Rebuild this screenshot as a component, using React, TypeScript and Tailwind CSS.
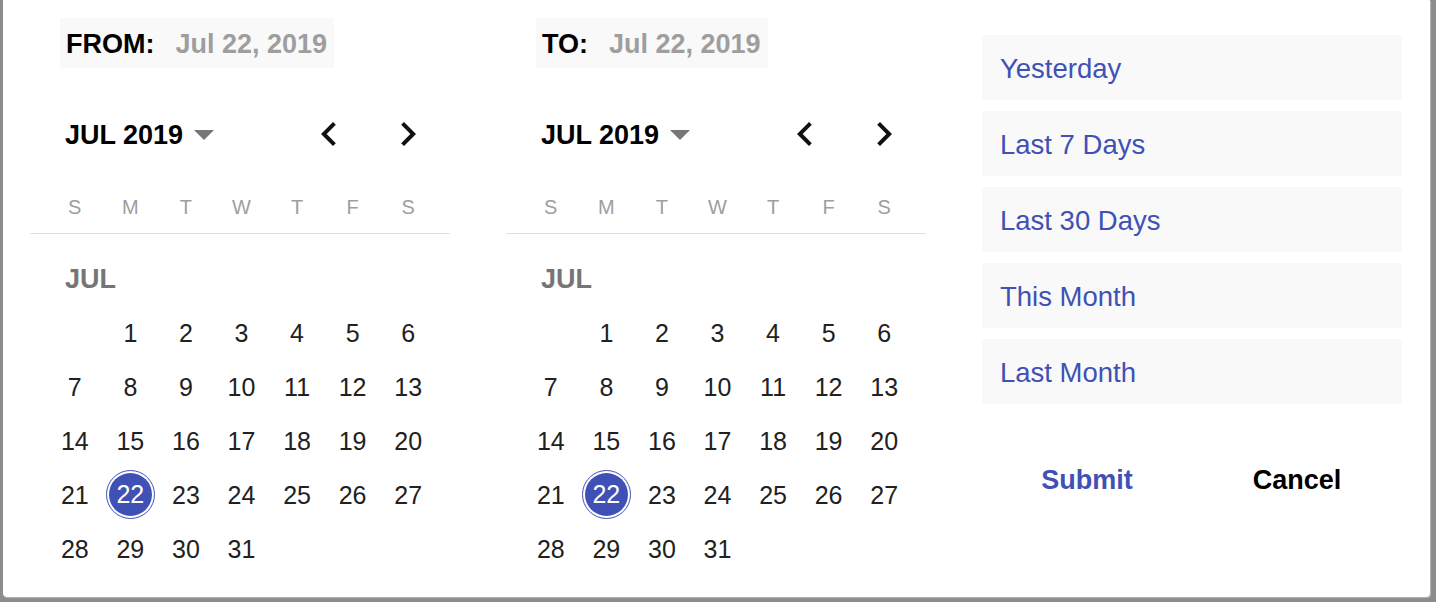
const WEEKDAYS = ['S', 'M', 'T', 'W', 'T', 'F', 'S'];
const PRESETS = ['Yesterday', 'Last 7 Days', 'Last 30 Days', 'This Month', 'Last Month'];

// July 2019 starts on a Monday
const cells: (number | null)[] = [null, ...Array.from({ length: 31 }, (_, i) => i + 1)];
while (cells.length % 7 !== 0) cells.push(null);
const weeks: (number | null)[][] = [];
for (let i = 0; i < cells.length; i += 7) weeks.push(cells.slice(i, i + 7));

const ChevronLeft = () => (
  <svg width="48" height="48" viewBox="0 0 24 24" fill="#111">
    <path d="M15.41 7.41L14 6l-6 6 6 6 1.41-1.41L10.83 12z" />
  </svg>
);

const ChevronRight = () => (
  <svg width="48" height="48" viewBox="0 0 24 24" fill="#111">
    <path d="M10 6L8.59 7.41 13.17 12l-4.58 4.59L10 18l6-6z" />
  </svg>
);

const Calendar = ({ label, selected }: { label: string; selected: number }) => (
  <div className="flex w-[420px] flex-col">
    {/* Date field */}
    <div className="ml-[30px] mt-[18px] flex h-[50px] w-fit items-center bg-[#f9f9f9] pl-[6px] pr-[7px] pt-[3px] text-[27px] font-bold">
      <span className="text-black">{label}</span>
      <span className="ml-[21px] text-[#9e9e9e]">Jul 22, 2019</span>
    </div>

    {/* Month header */}
    <div className="mt-[42px] flex h-[48px] items-center pl-[35px] pr-[18px]">
      <span className="pt-[2px] text-[27px] font-bold text-black">JUL 2019</span>
      <svg width="20" height="10" viewBox="0 0 20 10" className="ml-[11px] mt-[2px]">
        <polygon points="0,0 20,0 10,10" fill="#777" />
      </svg>
      <div className="ml-auto flex items-center gap-[31px]">
        <ChevronLeft />
        <ChevronRight />
      </div>
    </div>

    {/* Weekdays */}
    <div className="mt-[22px] grid h-[54px] grid-cols-7 items-center border-b border-[#e0e0e0] pl-[17px] pr-[14px] text-[20px] text-[#9e9e9e]">
      {WEEKDAYS.map((d, i) => (
        <span key={i} className="text-center">
          {d}
        </span>
      ))}
    </div>

    <div className="mt-[17px] flex h-[54px] items-center pl-[35px] pt-[2px] text-[27px] font-bold text-[#757575]">JUL</div>

    {weeks.map((week, wi) => (
      <div key={wi} className="grid h-[54px] grid-cols-7 pl-[17px] pr-[14px] text-[25px] text-[#212121]">
        {week.map((day, di) => (
          <div key={di} className="flex items-center justify-center">
            {day === selected ? (
              <div className="flex h-[49px] w-[49px] items-center justify-center rounded-full border-[1.5px] border-[#3f51b5] p-[2px]">
                <div className="flex h-full w-full items-center justify-center rounded-full bg-[#3f51b5] pt-[2px] text-white">
                  {day}
                </div>
              </div>
            ) : (
              <span className="pt-[4px]">{day}</span>
            )}
          </div>
        ))}
      </div>
    ))}
  </div>
);

export default function App() {
  return (
    <div className="h-[602px] w-[1436px] overflow-hidden bg-[#8c8c8c] font-['Liberation_Sans',Arial,sans-serif]">
      <div className="ml-[3px] flex h-[597px] w-[1427px] gap-[56px] rounded-b-[4px] bg-white pl-[27px] shadow-[1px_1px_1px_rgba(255,255,255,0.35)]">
        <Calendar label="FROM:" selected={22} />
        <Calendar label="TO:" selected={22} />

        {/* Presets */}
        <div className="flex w-[420px] flex-col">
          <div className="mt-[35px] flex flex-col gap-[11px]">
            {PRESETS.map((p) => (
              <div key={p} className="flex h-[65px] items-center bg-[#f9f9f9] pl-[18px] pt-[3px] text-[27.5px] text-[#3f51b5]">
                {p}
              </div>
            ))}
          </div>
          <div className="mt-[44px] grid h-[64px] grid-cols-2 items-center text-[27px] font-bold">
            <button className="text-center text-[#3f51b5]">Submit</button>
            <button className="text-center text-black">Cancel</button>
          </div>
        </div>
      </div>
    </div>
  );
}
